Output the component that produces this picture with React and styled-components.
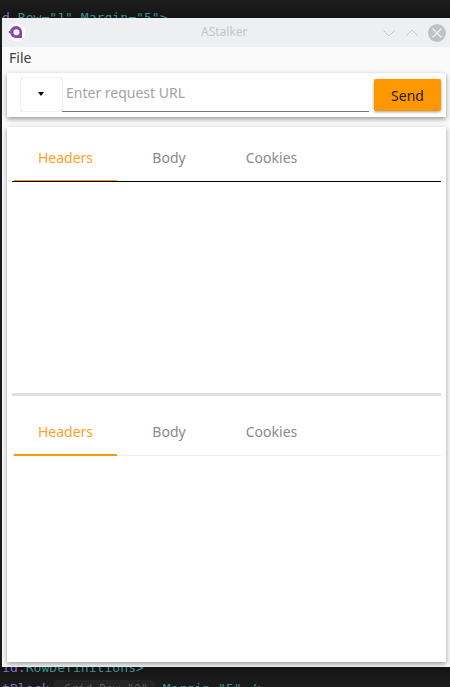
import styled, { createGlobalStyle } from "styled-components";

const Global = createGlobalStyle`
  html, body {
    margin: 0;
    padding: 0;
    background: #1b1b1b;
    overflow: hidden;
  }
  #root { height: 687px; }
`;

const Page = styled.div`
  width: 450px;
  height: 687px;
  display: flex;
  flex-direction: column;
  background: #1a1a1a;
  font-family: "Noto Sans", "Open Sans", sans-serif;
  overflow: hidden;
`;

const CodeStrip = styled.div`
  height: ${(p) => p.$height}px;
  flex: none;
  overflow: hidden;
  white-space: pre;
  background: linear-gradient(${(p) => p.$from}, ${(p) => p.$to});
  font-family: "DejaVu Sans Mono", "Liberation Mono", monospace;
  font-size: 13.1px;
  line-height: 21px;
  color: #3d8f8f;
`;

const CodeText = styled.div`
  margin-top: ${(p) => p.$top}px;
  margin-left: 2px;
`;

const Purple = styled.span`
  color: #8a6cc0;
`;
const Dim = styled.span`
  display: inline-block;
  margin-left: -4px;
  padding: 0 7px 0 11px;
  line-height: 18px;
  font-size: 11.6px;
  color: #5c5c5c;
  background: #242424;
  border-radius: 4px;
`;

const Window = styled.div`
  flex: none;
  width: 448px;
  height: 649px;
  margin-left: 2px;
  display: flex;
  flex-direction: column;
  background: #fafafa;
`;

const TitleBar = styled.div`
  position: relative;
  flex: none;
  height: 29px;
  display: flex;
  align-items: center;
  justify-content: flex-end;
  gap: 9px;
  padding: 0 4px 0 0;
  background: #eeeff1;
`;

const AppLogo = styled.svg`
  position: absolute;
  left: 5px;
  top: 5px;
`;

const WindowTitle = styled.div`
  position: absolute;
  left: 199px;
  top: 6px;
  font-size: 12px;
  line-height: 16px;
  color: #c4c5c7;
`;

const MenuBar = styled.div`
  flex: none;
  height: 26px;
  padding-left: 7px;
  font-size: 14px;
  line-height: 22px;
  color: #3c3c3c;
`;

const RequestCard = styled.div`
  flex: none;
  height: 44px;
  margin: 0 4px 0 5px;
  padding: 6px 5px 6px 14px;
  box-sizing: border-box;
  display: flex;
  background: #fff;
  box-shadow: 0 2px 5px rgba(0, 0, 0, 0.4);
`;

const MethodSelect = styled.div`
  flex: none;
  width: 41px;
  height: 33px;
  margin-top: -1px;
  box-sizing: border-box;
  display: flex;
  align-items: center;
  justify-content: center;
  padding: 0 2px 1px 0;
  background: #fff;
  border-radius: 2px;
  box-shadow: 0 0 1px rgba(0, 0, 0, 0.5);
`;

const Caret = styled.div`
  width: 0;
  height: 0;
  border-left: 3.5px solid transparent;
  border-right: 3.5px solid transparent;
  border-top: 4px solid #000;
`;

const UrlField = styled.div`
  flex: none;
  width: 307px;
  height: 33px;
  box-sizing: border-box;
  padding-left: 4px;
  border-bottom: 1px solid #777;
  font-size: 14px;
  line-height: 27px;
  color: #a3a3a3;
`;

const SendButton = styled.div`
  flex: none;
  width: 67px;
  height: 32px;
  margin-left: 5px;
  display: flex;
  align-items: center;
  justify-content: center;
  background: #ff9800;
  border-radius: 2px;
  box-shadow: 0 1px 3px rgba(0, 0, 0, 0.4);
  font-size: 14px;
  color: #2a1a00;
`;

const MainCard = styled.div`
  flex: none;
  height: 535px;
  margin: 10px 4px 0 5px;
  padding: 0 5px;
  box-sizing: border-box;
  display: flex;
  flex-direction: column;
  background: #fff;
  box-shadow: 0 2px 5px rgba(0, 0, 0, 0.4);
`;

const TabRow = styled.div`
  flex: none;
  height: ${(p) => p.$height}px;
  box-sizing: border-box;
  padding-left: 2px;
  display: flex;
  align-items: stretch;
  border-bottom: 1px solid ${(p) => p.$line};
`;

// the dark rule of the upper pane sits under a thinner indicator, so $thin stops above it
const Tab = styled.div`
  flex: none;
  width: ${(p) => p.$width}px;
  box-sizing: border-box;
  display: flex;
  align-items: center;
  justify-content: center;
  margin-bottom: ${(p) => (p.$thin ? 0 : -1)}px;
  padding-top: ${(p) => p.$top}px;
  font-size: 14px;
  color: ${(p) => (p.$active ? "#ff9f1a" : "#8a8a8a")};
  border-bottom: ${(p) => (p.$thin ? 1 : 2)}px solid
    ${(p) => (p.$active ? "#ff9800" : "transparent")};
`;

const TabBody = styled.div`
  flex: ${(p) => (p.$height ? "none" : "1")};
  height: ${(p) => (p.$height ? `${p.$height}px` : "auto")};
`;

const Splitter = styled.div`
  flex: none;
  height: 3px;
  background: #dfdfdf;
`;

const Tabs = ({ height, line, top, thin }) => (
  <TabRow $height={height} $line={line}>
    <Tab $active $thin={thin} $width={103} $top={top}>Headers</Tab>
    <Tab $thin={thin} $width={104} $top={top}>Body</Tab>
    <Tab $thin={thin} $width={101} $top={top}>Cookies</Tab>
  </TabRow>
);

const App = () => {
  return (
    <Page>
      <Global />
      <CodeStrip $height={18} $from="#1e1e1e" $to="#141414">
        <CodeText $top={7}>
          <Purple>d</Purple> Row="1" Margin="5"&gt;
        </CodeText>
      </CodeStrip>
      <Window>
        <TitleBar>
          <AppLogo width="19" height="19" viewBox="0 0 19 19">
            <circle cx="9.5" cy="9.5" r="9" fill="#fff" />
            <path
              d="M9 3a6 6 0 1 0 0 12h6V9a6 6 0 0 0-6-6z"
              fill="#8e44ad"
            />
            <circle cx="2.6" cy="9" r="1.1" fill="#8e44ad" />
            <circle cx="9.4" cy="9.2" r="3" fill="#fff" />
          </AppLogo>
          <WindowTitle>AStalker</WindowTitle>
          <svg width="14" height="14" viewBox="0 0 14 14" fill="none" stroke="#c6c7c9" strokeWidth="1">
            <path d="M1.5 4.5 7 10l5.5-5.5" />
          </svg>
          <svg width="14" height="14" viewBox="0 0 14 14" fill="none" stroke="#c6c7c9" strokeWidth="1">
            <path d="M1.5 9.5 7 4l5.5 5.5" />
          </svg>
          <svg width="18" height="18" viewBox="0 0 18 18" fill="none">
            <circle cx="9" cy="9" r="9" fill="#c0c1c3" />
            <path d="M4.5 4.5l9 9m0-9l-9 9" stroke="#f2f2f3" strokeWidth="1.2" />
          </svg>
        </TitleBar>
        <MenuBar>File</MenuBar>
        <RequestCard>
          <MethodSelect>
            <Caret />
          </MethodSelect>
          <UrlField>Enter request URL</UrlField>
          <SendButton>Send</SendButton>
        </RequestCard>
        <MainCard>
          <Tabs height={55} line="#000" top={8} thin />
          <TabBody $height={211} />
          <Splitter />
          <Tabs height={60} line="#eeeeee" top={13} />
          <TabBody />
        </MainCard>
      </Window>
      <CodeStrip $height={20} $from="#141414" $to="#1c1c1c">
        <CodeText $top={-10}>
          <Purple>id.</Purple>RowDefinitions&gt;
          {"\n"}
          <Purple>tBlock</Purple> <Dim>Grid.Row="0"</Dim> Margin="5" /&gt;
        </CodeText>
      </CodeStrip>
    </Page>
  );
};

export default App;
